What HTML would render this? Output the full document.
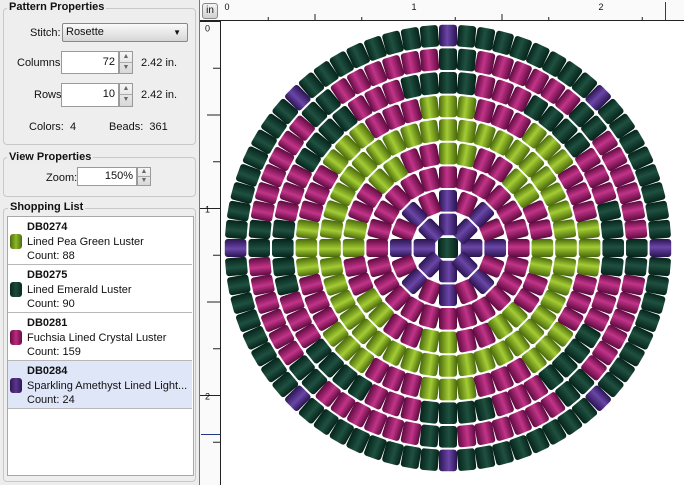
<!DOCTYPE html>
<html><head><meta charset="utf-8"><style>
*{box-sizing:border-box}
body{margin:0;width:684px;height:485px;overflow:hidden;background:#ededed;font-family:"Liberation Sans",Arial,sans-serif;font-size:11px;color:#111;position:relative}
.abs{position:absolute}
.grp{position:absolute;border:1px solid #c8c8c8;border-radius:4px;background:#eeeeee}
.ttl{position:absolute;font-weight:bold;font-size:11px;background:#ededed;padding:0 2px}
.inp{position:absolute;background:#fff;border:1px solid #9a9a9a;text-align:right;padding-right:3px;line-height:20px}
.spin{position:absolute;width:14px;border:1px solid #9a9a9a;background:linear-gradient(#f6f6f6,#d8d8d8)}
.spin div{height:50%;border-bottom:1px solid #aaa;text-align:center;font-size:7px;line-height:9px;color:#667}
.item{position:absolute;left:8px;width:184px;height:48px;border-bottom:1px solid #b8b8b8}
.item b{position:absolute;left:19px;top:4px;font-size:11px}
.item span{position:absolute;left:19px;font-size:11px}
.sw{position:absolute;left:2px;top:17px;width:12px;height:15px;border-radius:3px}
</style></head><body>
<div class="grp" style="left:3px;top:8px;width:193px;height:137px"></div>
<div class="ttl" style="left:7px;top:1px">Pattern Properties</div>
<div class="abs" style="left:30px;top:27px">Stitch:</div>
<div class="abs" style="left:62px;top:23px;width:126px;height:19px;border:1px solid #888;border-radius:2px;background:linear-gradient(#fafafa,#d6d6d6);padding-left:3px;line-height:17px">Rosette<span style="position:absolute;right:6px;top:0;font-size:8px">▼</span></div>
<div class="abs" style="left:17px;top:57px">Columns:</div>
<div class="inp" style="left:61px;top:51px;width:58px;height:23px">72</div>
<div class="spin" style="left:119px;top:51px;height:23px"><div>▲</div><div style="border:0">▼</div></div>
<div class="abs" style="left:141px;top:57px">2.42 in.</div>
<div class="abs" style="left:34px;top:89px">Rows:</div>
<div class="inp" style="left:61px;top:83px;width:58px;height:24px">10</div>
<div class="spin" style="left:119px;top:83px;height:24px"><div>▲</div><div style="border:0">▼</div></div>
<div class="abs" style="left:141px;top:89px">2.42 in.</div>
<div class="abs" style="left:29px;top:121px">Colors:&nbsp; 4</div>
<div class="abs" style="left:109px;top:121px">Beads:&nbsp; 361</div>

<div class="grp" style="left:3px;top:157px;width:193px;height:40px"></div>
<div class="ttl" style="left:7px;top:151px">View Properties</div>
<div class="abs" style="left:46px;top:172px">Zoom:</div>
<div class="inp" style="left:77px;top:167px;width:60px;height:19px;line-height:17px">150%</div>
<div class="spin" style="left:137px;top:167px;height:19px"><div style="line-height:8px">▲</div><div style="border:0;line-height:8px">▼</div></div>

<div class="grp" style="left:3px;top:208px;width:193px;height:274px"></div>
<div class="ttl" style="left:8px;top:201px">Shopping List</div>
<div class="abs" style="left:7px;top:216px;width:187px;height:260px;background:#fff;border:1px solid #a8a8a8"></div>
<div class="item" style="top:217px"><div class="sw" style="background:linear-gradient(90deg,#4e6c10,#8fb62a,#4e6c10)"></div><b>DB0274</b><span style="top:19px">Lined Pea Green Luster</span><span style="top:33px">Count: 88</span></div>
<div class="item" style="top:265px"><div class="sw" style="background:linear-gradient(90deg,#082a1e,#1d4a3a,#082a1e)"></div><b>DB0275</b><span style="top:19px">Lined Emerald Luster</span><span style="top:33px">Count: 90</span></div>
<div class="item" style="top:313px"><div class="sw" style="background:linear-gradient(90deg,#6a0c48,#b82a7e,#6a0c48)"></div><b>DB0281</b><span style="top:19px">Fuchsia Lined Crystal Luster</span><span style="top:33px">Count: 159</span></div>
<div class="item" style="top:361px;background:#dfe6f8"><div class="sw" style="background:linear-gradient(90deg,#2e1852,#5a3690,#2e1852)"></div><b>DB0284</b><span style="top:19px">Sparkling Amethyst Lined Light...</span><span style="top:33px">Count: 24</span></div>

<div class="abs" style="left:199px;top:0;width:485px;height:485px;background:#fff;border-left:1px solid #777"></div>
<div class="abs" style="left:200px;top:0;width:484px;height:21px;background:#fafafa;border-bottom:1px solid #222"></div>
<div class="abs" style="left:200px;top:21px;width:21px;height:464px;background:#fafafa;border-right:1px solid #222"></div>
<div class="abs" style="left:202px;top:3px;width:16px;height:16px;border:1px solid #888;border-radius:3px;background:linear-gradient(#f4f4f4,#d0d0d0);font-size:10px;text-align:center;line-height:14px">in</div>
<svg class="abs" style="left:0;top:0" width="684" height="485" id="sv">
<g id="rul" stroke="#222" stroke-width="1" font-size="9" font-family="Liberation Sans,sans-serif"></g>
<line x1="665.5" y1="2" x2="665.5" y2="20" stroke="#223a8a"/>
<line x1="201" y1="434.5" x2="220" y2="434.5" stroke="#223a8a"/>
<defs id="df"></defs>
<g id="beads"></g>
</svg>
<script>
var NS="http://www.w3.org/2000/svg",r=document.getElementById('rul');
function el(t,a,p){var e=document.createElementNS(NS,t);for(var k in a)e.setAttribute(k,a[k]);p.appendChild(e);return e;}
for(var i=0;i<=10;i++){var x=221.5+i*46.75;var h=(i%4==0)?20:(i%2==0?14:17);el('line',{x1:x,y1:h,x2:x,y2:21},r);
 if(i%4==0){var t=el('text',{x:x+3,y:10,stroke:'none',fill:'#111'},r);t.textContent=i/4;}}
for(var i=0;i<=9;i++){var y=21.5+i*46.75;var w=(i%4==0)?200:(i%2==0?207:213);el('line',{x1:w,y1:y,x2:221,y2:y},r);
 if(i%4==0){var t=el('text',{x:205,y:y+(i==0?10:4),stroke:'none',fill:'#111'},r);t.textContent=i/4;}}
var df=document.getElementById('df');
var C={G:['#4a6a0c','#a4cc34'],D:['#05231a','#1f5040'],F:['#5e0a40','#c23488'],P:['#2a1450','#6a46a8']};
for(var k in C){var g=el('linearGradient',{id:'g'+k,x1:0,y1:0,x2:1,y2:0},df);
 el('stop',{offset:0,'stop-color':C[k][0]},g);el('stop',{offset:0.45,'stop-color':C[k][1]},g);el('stop',{offset:1,'stop-color':C[k][0]},g);}
var B=document.getElementById('beads'),cx=448,cy=248,step=23.6;
function col(ring,i,N){var s=i%ring;
 switch(ring){case 1:return 'P';case 2:return s==0?'P':'F';case 3:return 'F';
 case 4:return (s==1||s==2)?'G':'F';case 5:return 'G';case 6:return (s>=2&&s<=4)?'G':'F';
 case 7:return (s>=2&&s<=5)?'D':'F';case 8:return (s==3||s==4)?'D':'F';case 9:return s==0?'P':'D';}}
el('rect',{x:cx-10,y:cy-10,width:20,height:20,rx:3,fill:'url(#gD)'},B);
for(var k=1;k<=9;k++){var N=8*k,R=k*step;var sh=(k==1||k==2||k==9)?0:Math.floor(k/2);
 for(var i=0;i<N;i++){var a=2*Math.PI*i/N;var x=cx+R*Math.cos(a),y=cy-R*Math.sin(a);
  var deg=-a*180/Math.PI+90;
  el('rect',{x:-9,y:-10.8,width:18,height:21.6,rx:3,fill:'url(#g'+col(k,(i+sh)%N,N)+')',transform:'translate('+x.toFixed(1)+','+y.toFixed(1)+') rotate('+deg.toFixed(1)+')'},B);}}
</script>
</body></html>
